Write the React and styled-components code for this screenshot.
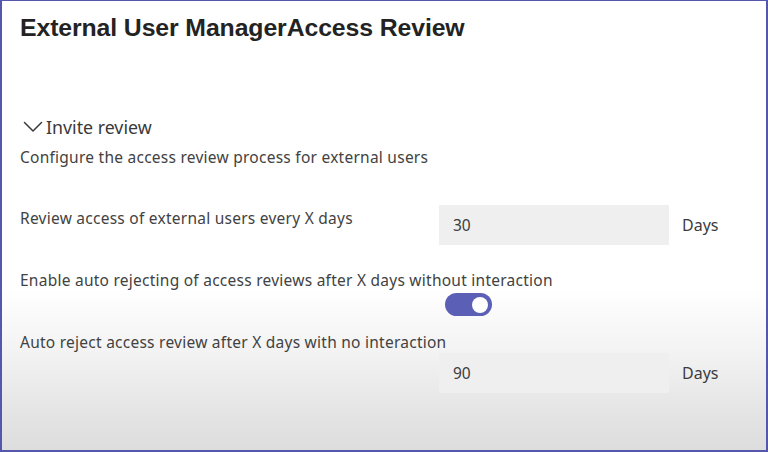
import { createGlobalStyle } from 'styled-components';
import styled from 'styled-components';

const GlobalStyle = createGlobalStyle`
  html, body {
    margin: 0;
    padding: 0;
    background: #ffffff;
  }
  * {
    box-sizing: border-box;
  }
`;

const Frame = styled.div`
  width: 768px;
  height: 452px;
  overflow: hidden;
  border-style: solid;
  border-color: #5457ad;
  border-width: 1px 2px 2px 2px;
  background: linear-gradient(
    to bottom,
    #ffffff 0%,
    #ffffff 64%,
    #f3f3f3 78%,
    #e6e6e6 90%,
    #dddddd 100%
  );
  padding: 12px 0 0 18px;
  font-family: 'Noto Sans', 'Liberation Sans', sans-serif;
  color: #424242;
`;

const Title = styled.h1`
  margin: 0;
  font-family: 'Liberation Sans', Arial, sans-serif;
  font-weight: 700;
  font-size: 24.8px;
  line-height: 30px;
  color: #232323;
  letter-spacing: -0.1px;
`;

const SectionHeader = styled.div`
  display: flex;
  align-items: center;
  gap: 3px;
  margin-top: 72px;
  height: 24px;
  font-size: 17.8px;
  color: #3a3a3a;
`;

const Chevron = styled.svg`
  width: 20px;
  height: 12px;
  margin-left: 3px;
  flex-shrink: 0;
`;

const Description = styled.p`
  margin: 8px 0 0 0;
  font-size: 15.5px;
  letter-spacing: 0.25px;
  line-height: 20px;
`;

const Form = styled.div`
  display: grid;
  grid-template-columns: 419px 230px auto;
  align-items: start;
  margin-top: 38px;
`;

const Label = styled.div`
  grid-column: ${(p) => (p.$wide ? '1 / -1' : '1')};
  font-size: 15.5px;
  letter-spacing: 0.25px;
  line-height: 20px;
  margin-top: ${(p) => p.$top || 0}px;
  padding-top: ${(p) => p.$pad || 0}px;
`;

const NumberBox = styled.div`
  grid-column: 2;
  height: 40px;
  background: #efefef;
  display: flex;
  align-items: center;
  padding-left: 14px;
  font-size: 15.5px;
  color: #3c3c3c;
  margin-top: ${(p) => p.$top || 0}px;
`;

const Unit = styled.div`
  grid-column: 3;
  height: 40px;
  display: flex;
  align-items: center;
  padding-left: 13px;
  font-size: 16px;
  color: #3c3c3c;
  margin-top: ${(p) => p.$top || 0}px;
`;

const Toggle = styled.div`
  grid-column: 2;
  margin-top: ${(p) => p.$top || 0}px;
  margin-left: 6px;
  width: 47px;
  height: 23px;
  border-radius: 12px;
  background: #5b5fb5;
  display: flex;
  align-items: center;
  justify-content: ${(p) => (p.$on ? 'flex-end' : 'flex-start')};
  padding: 0 4px;
`;

const Knob = styled.span`
  width: 16px;
  height: 16px;
  border-radius: 50%;
  background: #ffffff;
`;

export default function App() {
  return (
    <>
      <GlobalStyle />
      <Frame>
        <Title>External User ManagerAccess Review</Title>

        <SectionHeader>
          <Chevron viewBox="0 0 20 12" fill="none">
            <polyline
              points="1.5,1.5 10,10 18.5,1.5"
              stroke="#3a3a3a"
              strokeWidth="1.5"
              strokeLinecap="round"
              strokeLinejoin="round"
            />
          </Chevron>
          Invite review
        </SectionHeader>
        <Description>Configure the access review process for external users</Description>

        <Form>
          <Label $pad={3}>Review access of external users every X days</Label>
          <NumberBox>30</NumberBox>
          <Unit>Days</Unit>

          <Label $wide $top={25}>
            Enable auto rejecting of access reviews after X days without interaction
          </Label>
          <Toggle $on $top={3}>
            <Knob />
          </Toggle>

          <Label $wide $top={16}>
            Auto reject access review after X days with no interaction
          </Label>
          <NumberBox $top={1}>90</NumberBox>
          <Unit $top={1}>Days</Unit>
        </Form>
      </Frame>
    </>
  );
}
